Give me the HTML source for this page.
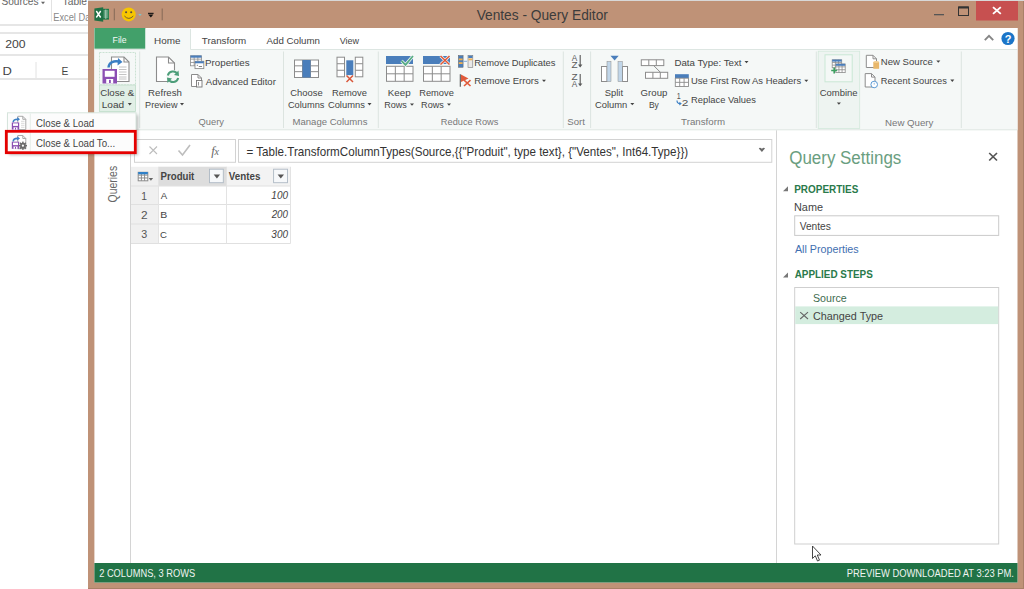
<!DOCTYPE html>
<html><head><meta charset="utf-8"><style>
html,body{margin:0;padding:0;width:1024px;height:589px;overflow:hidden;background:#fff}
svg{position:absolute;left:0;top:0;display:block}
text{font-family:"Liberation Sans",sans-serif;white-space:pre}
</style></head><body>
<svg width="1024" height="589" viewBox="0 0 1024 589">
<rect x="0" y="0" width="1024" height="589" fill="#FFFFFF"/>
<text x="1.44" y="4.80" font-size="11" fill="#666" textLength="37.09" lengthAdjust="spacingAndGlyphs">Sources</text>
<path d="M41.0 1.75 L45.0 1.75 L43 4.25 Z" fill="#666"/>
<line x1="51.5" y1="0" x2="51.5" y2="21.5" stroke="#E2E2E2" stroke-width="1"/>
<text x="62.60" y="4.80" font-size="11" fill="#666" textLength="24.47" lengthAdjust="spacingAndGlyphs">Table</text>
<text x="53.26" y="21.10" font-size="10" fill="#888" textLength="44.75" lengthAdjust="spacingAndGlyphs">Excel Data</text>
<rect x="0" y="24" width="88" height="2" fill="#E6E6E6"/>
<rect x="0" y="32" width="88" height="2" fill="#E6E6E6"/>
<text x="5.29" y="47.90" font-size="11" fill="#444" textLength="20.38" lengthAdjust="spacingAndGlyphs">200</text>
<rect x="0" y="54" width="88" height="2" fill="#E6E6E6"/>
<text x="2.56" y="74.70" font-size="11" fill="#444" textLength="9.35" lengthAdjust="spacingAndGlyphs">D</text>
<text x="61.58" y="74.70" font-size="11" fill="#444" textLength="6.85" lengthAdjust="spacingAndGlyphs">E</text>
<line x1="36" y1="62" x2="36" y2="78" stroke="#E2E2E2" stroke-width="1"/>
<rect x="0" y="78" width="88" height="2" fill="#E6E6E6"/>
<rect x="88" y="0" width="936" height="1" fill="#D8D8D8"/>
<rect x="88" y="1" width="935" height="587" fill="#BF9277"/>
<rect x="1023" y="1" width="1" height="588" fill="#A88068"/>
<rect x="88" y="588" width="936" height="1" fill="#A88068"/>
<text x="476.63" y="19.50" font-size="15" fill="#3C3C3C" textLength="131.25" lengthAdjust="spacingAndGlyphs">Ventes - Query Editor</text>
<rect x="976" y="1" width="42" height="19.5" fill="#C75050"/>
<path d="M993 7.1 L1000.8 13.9 M1000.8 7.1 L993 13.9" fill="none" stroke="#FFFFFF" stroke-width="1.9"/>
<rect x="958.5" y="7" width="10" height="8.5" fill="none" stroke="#333" stroke-width="1"/>
<rect x="958.5" y="6.5" width="10" height="2" fill="#333"/>
<rect x="934" y="14" width="10" height="1.3" fill="#555"/>
<rect x="94.4" y="28" width="923.1" height="554.5" fill="#FFFFFF"/>
<rect x="102.5" y="8.8" width="6.5" height="10.8" fill="#1F7A48"/>
<line x1="103.5" y1="11" x2="108.3" y2="11" stroke="#E8F3EC" stroke-width="0.6"/>
<line x1="103.5" y1="13" x2="108.3" y2="13" stroke="#E8F3EC" stroke-width="0.6"/>
<line x1="103.5" y1="15" x2="108.3" y2="15" stroke="#E8F3EC" stroke-width="0.6"/>
<line x1="103.5" y1="17" x2="108.3" y2="17" stroke="#E8F3EC" stroke-width="0.6"/>
<line x1="105.8" y1="9.5" x2="105.8" y2="19" stroke="#E8F3EC" stroke-width="0.6"/>
<path d="M94.4 8.6 L103.2 7.2 L103.2 21.8 L94.4 20.4 Z" fill="#1E7145"/>
<path d="M96.3 11 L100.7 17.5 M100.7 11 L96.3 17.5" fill="none" stroke="#FFFFFF" stroke-width="1.4"/>
<line x1="114.3" y1="8.5" x2="114.3" y2="20.3" stroke="#7E6553" stroke-width="0.9"/>
<circle cx="128.7" cy="14.4" r="7" fill="#F7C600"/>
<circle cx="126.1" cy="12.2" r="1.05" fill="#5A4A40"/><circle cx="131.2" cy="12.2" r="1.05" fill="#5A4A40"/>
<path d="M124.4 16 Q128.8 20.8 133.3 16" fill="none" stroke="#6A5530" stroke-width="0.9"/>
<path d="M138.25 13.9 L141.75 13.9 L140 16.1 Z" fill="#7FC4C8"/>
<rect x="148" y="12.8" width="5.6" height="1.1" fill="#111"/>
<path d="M148.20000000000002 14.5 L153.4 14.5 L150.8 17.5 Z" fill="#111"/>
<line x1="162.2" y1="8.5" x2="162.2" y2="20.3" stroke="#7E6553" stroke-width="0.9"/>
<rect x="94.4" y="28" width="923.1" height="21.5" fill="#FFFFFF"/>
<rect x="94.4" y="49" width="923.1" height="1" fill="#DDE6E2"/>
<rect x="94.4" y="28" width="51.1" height="20.7" fill="#42A06A"/>
<text x="112.61" y="42.50" font-size="9.6" fill="#F4FAF6" textLength="14.00" lengthAdjust="spacingAndGlyphs">File</text>
<rect x="145.5" y="28.5" width="45" height="21.5" fill="#F5F8F7"/>
<line x1="190.5" y1="29" x2="190.5" y2="49.5" stroke="#DCE5E1" stroke-width="1"/>
<text x="154.11" y="43.60" font-size="9.4" fill="#444444" textLength="26.47" lengthAdjust="spacingAndGlyphs">Home</text>
<text x="201.80" y="43.60" font-size="9.4" fill="#444444" textLength="44.33" lengthAdjust="spacingAndGlyphs">Transform</text>
<text x="266.50" y="43.60" font-size="9.4" fill="#444444" textLength="53.46" lengthAdjust="spacingAndGlyphs">Add Column</text>
<text x="339.66" y="43.60" font-size="9.4" fill="#444444" textLength="19.34" lengthAdjust="spacingAndGlyphs">View</text>
<path d="M984.8 40.2 L989 35.8 L993.2 40.2" fill="none" stroke="#858585" stroke-width="1.9"/>
<circle cx="1008" cy="38.5" r="6.6" fill="#1B75C8"/>
<text x="1004.71" y="42.80" font-size="11" fill="#FFFFFF" font-weight="bold" textLength="6.71" lengthAdjust="spacingAndGlyphs">?</text>
<rect x="94.4" y="50" width="923.1" height="79.5" fill="#F5F8F7"/>
<rect x="94.4" y="129.3" width="923.1" height="1" fill="#DDE6E2"/>
<line x1="139.7" y1="51.5" x2="139.7" y2="128" stroke="#DCE4E0" stroke-width="1"/>
<line x1="283.5" y1="51.5" x2="283.5" y2="128" stroke="#DCE4E0" stroke-width="1"/>
<line x1="378.3" y1="51.5" x2="378.3" y2="128" stroke="#DCE4E0" stroke-width="1"/>
<line x1="563.3" y1="51.5" x2="563.3" y2="128" stroke="#DCE4E0" stroke-width="1"/>
<line x1="590.6" y1="51.5" x2="590.6" y2="128" stroke="#DCE4E0" stroke-width="1"/>
<line x1="816.3" y1="51.5" x2="816.3" y2="128" stroke="#DCE4E0" stroke-width="1"/>
<line x1="961.3" y1="51.5" x2="961.3" y2="128" stroke="#DCE4E0" stroke-width="1"/>
<rect x="99.5" y="52.5" width="36" height="32.5" fill="none" stroke="#BFDCC9" stroke-width="0.8" stroke-dasharray="2 1"/>
<rect x="99.5" y="85" width="36" height="26.5" fill="#E1EFE6" stroke="#BFDCC9" stroke-width="0.8"/>
<text x="100.22" y="95.80" font-size="9.4" fill="#444444" textLength="33.95" lengthAdjust="spacingAndGlyphs">Close &amp;</text>
<text x="101.69" y="108.00" font-size="9.4" fill="#444444" textLength="22.46" lengthAdjust="spacingAndGlyphs">Load</text>
<path d="M127.80000000000001 103.1 L131.8 103.1 L129.8 105.5 Z" fill="#444444"/>
<text x="148.13" y="95.80" font-size="9.4" fill="#444444" textLength="33.82" lengthAdjust="spacingAndGlyphs">Refresh</text>
<text x="145.07" y="108.00" font-size="9.4" fill="#444444" textLength="32.40" lengthAdjust="spacingAndGlyphs">Preview</text>
<path d="M180.0 103.1 L184.0 103.1 L182 105.5 Z" fill="#444444"/>
<text x="205.02" y="65.60" font-size="9.4" fill="#444444" textLength="44.60" lengthAdjust="spacingAndGlyphs">Properties</text>
<text x="205.80" y="84.50" font-size="9.4" fill="#444444" textLength="70.07" lengthAdjust="spacingAndGlyphs">Advanced Editor</text>
<text x="198.58" y="125.10" font-size="9.4" fill="#777777" textLength="25.40" lengthAdjust="spacingAndGlyphs">Query</text>
<text x="290.23" y="95.80" font-size="9.4" fill="#444444" textLength="32.41" lengthAdjust="spacingAndGlyphs">Choose</text>
<text x="287.94" y="108.00" font-size="9.4" fill="#444444" textLength="36.49" lengthAdjust="spacingAndGlyphs">Columns</text>
<text x="331.95" y="95.80" font-size="9.4" fill="#444444" textLength="34.96" lengthAdjust="spacingAndGlyphs">Remove</text>
<text x="327.93" y="108.00" font-size="9.4" fill="#444444" textLength="36.90" lengthAdjust="spacingAndGlyphs">Columns</text>
<path d="M367.5 103.1 L371.5 103.1 L369.5 105.5 Z" fill="#444444"/>
<text x="292.54" y="125.10" font-size="9.4" fill="#777777" textLength="74.88" lengthAdjust="spacingAndGlyphs">Manage Columns</text>
<text x="387.82" y="96.30" font-size="9.4" fill="#444444" textLength="22.78" lengthAdjust="spacingAndGlyphs">Keep</text>
<text x="384.18" y="108.40" font-size="9.4" fill="#444444" textLength="22.65" lengthAdjust="spacingAndGlyphs">Rows</text>
<path d="M410.0 103.39999999999999 L414.0 103.39999999999999 L412 105.8 Z" fill="#444444"/>
<text x="419.26" y="96.30" font-size="9.4" fill="#444444" textLength="34.55" lengthAdjust="spacingAndGlyphs">Remove</text>
<text x="421.07" y="108.40" font-size="9.4" fill="#444444" textLength="22.75" lengthAdjust="spacingAndGlyphs">Rows</text>
<path d="M447.0 103.39999999999999 L451.0 103.39999999999999 L449 105.8 Z" fill="#444444"/>
<text x="474.25" y="65.60" font-size="9.4" fill="#444444" textLength="81.28" lengthAdjust="spacingAndGlyphs">Remove Duplicates</text>
<text x="474.23" y="84.30" font-size="9.4" fill="#444444" textLength="64.59" lengthAdjust="spacingAndGlyphs">Remove Errors</text>
<path d="M542.0 79.7 L546.0 79.7 L544 82.10000000000001 Z" fill="#444444"/>
<text x="440.86" y="125.30" font-size="9.4" fill="#777777" textLength="57.46" lengthAdjust="spacingAndGlyphs">Reduce Rows</text>
<text x="567.27" y="125.30" font-size="9.4" fill="#777777" textLength="17.62" lengthAdjust="spacingAndGlyphs">Sort</text>
<text x="604.78" y="95.70" font-size="9.4" fill="#444444" textLength="18.27" lengthAdjust="spacingAndGlyphs">Split</text>
<text x="594.93" y="107.90" font-size="9.4" fill="#444444" textLength="32.29" lengthAdjust="spacingAndGlyphs">Column</text>
<path d="M630.3 102.89999999999999 L634.3 102.89999999999999 L632.3 105.3 Z" fill="#444444"/>
<text x="640.62" y="95.70" font-size="9.4" fill="#444444" textLength="26.76" lengthAdjust="spacingAndGlyphs">Group</text>
<text x="648.92" y="107.90" font-size="9.4" fill="#444444" textLength="9.90" lengthAdjust="spacingAndGlyphs">By</text>
<text x="674.42" y="65.60" font-size="9.4" fill="#444444" textLength="67.14" lengthAdjust="spacingAndGlyphs">Data Type: Text</text>
<path d="M744.5 60.9 L748.5 60.9 L746.5 63.300000000000004 Z" fill="#444444"/>
<text x="691.10" y="84.30" font-size="9.4" fill="#444444" textLength="110.04" lengthAdjust="spacingAndGlyphs">Use First Row As Headers</text>
<path d="M804.3 79.7 L808.3 79.7 L806.3 82.10000000000001 Z" fill="#444444"/>
<text x="691.05" y="102.60" font-size="9.4" fill="#444444" textLength="64.88" lengthAdjust="spacingAndGlyphs">Replace Values</text>
<text x="681.11" y="125.30" font-size="9.4" fill="#777777" textLength="43.92" lengthAdjust="spacingAndGlyphs">Transform</text>
<rect x="818.2" y="51.2" width="41.5" height="77.3" fill="#EEF4F1" stroke="#D2E8DB" stroke-width="0.8"/>
<rect x="825" y="54.8" width="27.2" height="27" fill="#F4F8F6" stroke="#C9E7D5" stroke-width="1"/>
<text x="819.73" y="95.70" font-size="9.4" fill="#444444" textLength="37.92" lengthAdjust="spacingAndGlyphs">Combine</text>
<path d="M836.9 102.39999999999999 L840.9 102.39999999999999 L838.9 104.8 Z" fill="#444444"/>
<text x="880.83" y="65.20" font-size="9.4" fill="#444444" textLength="52.11" lengthAdjust="spacingAndGlyphs">New Source</text>
<path d="M936.3 60.4 L940.3 60.4 L938.3 62.800000000000004 Z" fill="#444444"/>
<text x="880.86" y="84.30" font-size="9.4" fill="#444444" textLength="65.97" lengthAdjust="spacingAndGlyphs">Recent Sources</text>
<path d="M950.3 79.5 L954.3 79.5 L952.3 81.9 Z" fill="#444444"/>
<text x="885.03" y="125.70" font-size="9.4" fill="#777777" textLength="48.39" lengthAdjust="spacingAndGlyphs">New Query</text>
<path d="M111.5 57 L124 57 L129 62 L129 81.5 L111.5 81.5 Z" fill="#FFFFFF" stroke="#8C8C8C" stroke-width="1.1"/>
<path d="M124 57 L124 62 L129 62" fill="none" stroke="#8C8C8C" stroke-width="1.1"/>
<line x1="119" y1="67" x2="126.5" y2="67" stroke="#BDBDBD" stroke-width="0.9"/>
<line x1="119" y1="69.5" x2="126.5" y2="69.5" stroke="#BDBDBD" stroke-width="0.9"/>
<line x1="119" y1="72" x2="126.5" y2="72" stroke="#BDBDBD" stroke-width="0.9"/>
<line x1="119" y1="74.5" x2="126.5" y2="74.5" stroke="#BDBDBD" stroke-width="0.9"/>
<line x1="119" y1="77" x2="126.5" y2="77" stroke="#BDBDBD" stroke-width="0.9"/>
<line x1="119" y1="79" x2="126.5" y2="79" stroke="#BDBDBD" stroke-width="0.9"/>
<path d="M108.5 67.5 C109 62 114 60.5 119 61.5" fill="none" stroke="#3B7FC4" stroke-width="2.4"/>
<path d="M118 58 L122.5 62 L117.5 65.5 Z" fill="#3B7FC4"/>
<rect x="102.5" y="69" width="14.5" height="14.5" fill="#8B4FB3"/>
<rect x="104.8" y="70.8" width="9.8" height="6" fill="#FFFFFF"/>
<rect x="106.2" y="79" width="7" height="4.5" fill="#FFFFFF"/>
<rect x="109" y="79.8" width="1.8" height="3.2" fill="#8B4FB3"/>
<path d="M156.5 57 L168.5 57 L174.5 63 L174.5 81.5 L156.5 81.5 Z" fill="#FFFFFF" stroke="#8C8C8C" stroke-width="1.1"/>
<path d="M168.5 57 L168.5 63 L174.5 63" fill="none" stroke="#8C8C8C" stroke-width="1.1"/>
<circle cx="173" cy="76.8" r="6.8" fill="#F5F8F7"/>
<path d="M167.8 75.5 A5.3 5.3 0 0 1 177.5 74" fill="none" stroke="#4D9E7A" stroke-width="2"/>
<path d="M178.5 70.5 L179 76 L174 75 Z" fill="#4D9E7A"/>
<path d="M178.2 78 A5.3 5.3 0 0 1 168.5 79.5" fill="none" stroke="#4D9E7A" stroke-width="2"/>
<path d="M167.5 83 L167 77.5 L172 78.5 Z" fill="#4D9E7A"/>
<rect x="190.5" y="55.8" width="11.0" height="10.0" fill="#FFFFFF" stroke="#8C8C8C" stroke-width="0.8"/>
<line x1="194.16666666666666" y1="55.8" x2="194.16666666666666" y2="65.8" stroke="#8C8C8C" stroke-width="0.8"/>
<line x1="197.83333333333334" y1="55.8" x2="197.83333333333334" y2="65.8" stroke="#8C8C8C" stroke-width="0.8"/>
<line x1="190.5" y1="59.13333333333333" x2="201.5" y2="59.13333333333333" stroke="#8C8C8C" stroke-width="0.8"/>
<line x1="190.5" y1="62.46666666666666" x2="201.5" y2="62.46666666666666" stroke="#8C8C8C" stroke-width="0.8"/>
<rect x="190.5" y="55.5" width="11" height="2.2" fill="#4A7EBB"/>
<rect x="195" y="61.3" width="8.8" height="7.3" fill="#FFFFFF" stroke="#8C8C8C" stroke-width="0.9"/>
<rect x="195" y="61.3" width="8.8" height="2" fill="#4A7EBB"/>
<line x1="196.8" y1="65.3" x2="198" y2="65.3" stroke="#777" stroke-width="0.9"/>
<line x1="198.8" y1="66.5" x2="202" y2="66.5" stroke="#777" stroke-width="0.9"/>
<path d="M191.5 74.5 L198.0 74.5 L201.5 78.0 L201.5 86.5 L191.5 86.5 Z" fill="#FFFFFF" stroke="#8C8C8C" stroke-width="1"/>
<path d="M198.0 74.5 L198.0 78.0 L201.5 78.0" fill="none" stroke="#8C8C8C" stroke-width="1"/>
<rect x="196.5" y="80.5" width="5.5" height="6.5" fill="#FFFFFF" stroke="#777" stroke-width="0.9"/>
<line x1="198.5" y1="82" x2="198.5" y2="85.5" stroke="#777" stroke-width="0.8"/>
<rect x="294.5" y="60" width="24.0" height="17.5" fill="#FFFFFF" stroke="#8C8C8C" stroke-width="1"/>
<line x1="302.5" y1="60" x2="302.5" y2="77.5" stroke="#8C8C8C" stroke-width="1"/>
<line x1="310.5" y1="60" x2="310.5" y2="77.5" stroke="#8C8C8C" stroke-width="1"/>
<line x1="294.5" y1="65.83333333333333" x2="318.5" y2="65.83333333333333" stroke="#8C8C8C" stroke-width="1"/>
<line x1="294.5" y1="71.66666666666667" x2="318.5" y2="71.66666666666667" stroke="#8C8C8C" stroke-width="1"/>
<rect x="302.5" y="60" width="8" height="17.5" fill="#4A7EBB"/>
<rect x="337" y="57.2" width="7.5" height="19.599999999999994" fill="#FFFFFF" stroke="#8C8C8C" stroke-width="1"/>
<line x1="337" y1="63.733333333333334" x2="344.5" y2="63.733333333333334" stroke="#8C8C8C" stroke-width="1"/>
<line x1="337" y1="70.26666666666667" x2="344.5" y2="70.26666666666667" stroke="#8C8C8C" stroke-width="1"/>
<rect x="355.3" y="57.2" width="7.5" height="19.599999999999994" fill="#FFFFFF" stroke="#8C8C8C" stroke-width="1"/>
<line x1="355.3" y1="63.733333333333334" x2="362.8" y2="63.733333333333334" stroke="#8C8C8C" stroke-width="1"/>
<line x1="355.3" y1="70.26666666666667" x2="362.8" y2="70.26666666666667" stroke="#8C8C8C" stroke-width="1"/>
<rect x="346.3" y="60.3" width="7" height="14.8" fill="#4A7EBB"/>
<path d="M346.5 75.5 L353 82 M353 75.5 L346.5 82" fill="none" stroke="#D9573A" stroke-width="1.5"/>
<rect x="386" y="56" width="27" height="8" fill="#4A7EBB"/>
<rect x="386.5" y="66.3" width="26.5" height="15.0" fill="#FFFFFF" stroke="#8C8C8C" stroke-width="1"/>
<line x1="395.3333333333333" y1="66.3" x2="395.3333333333333" y2="81.3" stroke="#8C8C8C" stroke-width="1"/>
<line x1="404.1666666666667" y1="66.3" x2="404.1666666666667" y2="81.3" stroke="#8C8C8C" stroke-width="1"/>
<line x1="386.5" y1="73.8" x2="413" y2="73.8" stroke="#8C8C8C" stroke-width="1"/>
<path d="M401.5 60.8 L405.5 64.8 L413 56" fill="none" stroke="#F5F8F7" stroke-width="3.2"/>
<path d="M401.5 60.8 L405.5 64.8 L413 56" fill="none" stroke="#58AD85" stroke-width="1.8"/>
<rect x="423" y="56" width="27" height="8" fill="#4A7EBB"/>
<rect x="423.5" y="66.3" width="26.5" height="15.0" fill="#FFFFFF" stroke="#8C8C8C" stroke-width="1"/>
<line x1="432.3333333333333" y1="66.3" x2="432.3333333333333" y2="81.3" stroke="#8C8C8C" stroke-width="1"/>
<line x1="441.1666666666667" y1="66.3" x2="441.1666666666667" y2="81.3" stroke="#8C8C8C" stroke-width="1"/>
<line x1="423.5" y1="73.8" x2="450" y2="73.8" stroke="#8C8C8C" stroke-width="1"/>
<path d="M440.5 56 L449.5 64.5 M449.5 56 L440.5 64.5" fill="none" stroke="#F5F8F7" stroke-width="3"/>
<path d="M440.5 56 L449.5 64.5 M449.5 56 L440.5 64.5" fill="none" stroke="#E05A3A" stroke-width="1.6"/>
<rect x="458.3" y="55.5" width="4.8" height="11.8" fill="#4A7EBB" stroke="#666" stroke-width="0.5"/>
<rect x="458.8" y="58.5" width="3.8" height="1.8" fill="#F0B050"/>
<rect x="458.8" y="62.2" width="3.8" height="1.8" fill="#F0B050"/>
<rect x="468" y="55.5" width="4.8" height="11.8" fill="#E8E8E8" stroke="#777" stroke-width="0.6"/>
<rect x="468.3" y="55.7" width="4.2" height="2.3" fill="#4A7EBB"/>
<rect x="468.5" y="58.5" width="3.8" height="1.8" fill="#F0B050"/>
<line x1="463.5" y1="61.3" x2="467" y2="61.3" stroke="#6FA0D8" stroke-width="0.9"/>
<line x1="460.3" y1="74.3" x2="460.3" y2="86.8" stroke="#555" stroke-width="1.1"/>
<path d="M461 74.5 L468.5 78.5 L461 82 Z" fill="#E05A3A"/>
<path d="M464 80.2 L470.5 86 M470.5 80.2 L464 86" fill="none" stroke="#E05A3A" stroke-width="1.6"/>
<text x="571.80" y="60.90" font-size="8.2" fill="#5A5A5A" textLength="5.52" lengthAdjust="spacingAndGlyphs">A</text>
<text x="571.50" y="67.80" font-size="8.2" fill="#5A5A5A" textLength="6.11" lengthAdjust="spacingAndGlyphs">Z</text>
<line x1="580.2" y1="55.1" x2="580.2" y2="66.4" stroke="#5A5A5A" stroke-width="1.1"/>
<path d="M578 64.6 L582.4 64.6 L580.2 67.4 Z" fill="#5A5A5A"/>
<text x="571.50" y="79.70" font-size="8.2" fill="#5A5A5A" textLength="6.11" lengthAdjust="spacingAndGlyphs">Z</text>
<text x="571.80" y="86.60" font-size="8.2" fill="#5A5A5A" textLength="5.52" lengthAdjust="spacingAndGlyphs">A</text>
<line x1="580.2" y1="73.9" x2="580.2" y2="85.2" stroke="#5A5A5A" stroke-width="1.1"/>
<path d="M578 83.4 L582.4 83.4 L580.2 86.2 Z" fill="#5A5A5A"/>
<rect x="601.5" y="66.5" width="5.5" height="15" fill="#FFFFFF" stroke="#8C8C8C" stroke-width="1"/>
<rect x="622.5" y="66.5" width="5" height="15" fill="#FFFFFF" stroke="#8C8C8C" stroke-width="1"/>
<rect x="607" y="61.5" width="4" height="20" fill="#C1D6E9" stroke="#8C8C8C" stroke-width="0.5"/>
<rect x="618" y="61.5" width="4.3" height="20" fill="#C1D6E9" stroke="#8C8C8C" stroke-width="0.5"/>
<path d="M610.5 55.8 L618.7 55.8 L614.6 60.6 Z" fill="#4A7EBB"/>
<rect x="641.3" y="59.8" width="22.5" height="5.799999999999997" fill="#FFFFFF" stroke="#8C8C8C" stroke-width="1"/>
<line x1="648.8" y1="59.8" x2="648.8" y2="65.6" stroke="#8C8C8C" stroke-width="1"/>
<line x1="656.3" y1="59.8" x2="656.3" y2="65.6" stroke="#8C8C8C" stroke-width="1"/>
<rect x="645.5" y="72.3" width="22.200000000000045" height="6.0" fill="#FFFFFF" stroke="#8C8C8C" stroke-width="1"/>
<line x1="652.9" y1="72.3" x2="652.9" y2="78.3" stroke="#8C8C8C" stroke-width="1"/>
<line x1="660.3000000000001" y1="72.3" x2="660.3000000000001" y2="78.3" stroke="#8C8C8C" stroke-width="1"/>
<line x1="653.7" y1="65.6" x2="660.4" y2="72.3" stroke="#8C8C8C" stroke-width="1"/>
<rect x="675" y="74.2" width="13.8" height="4" fill="#4A7EBB"/>
<rect x="675.3" y="78.2" width="13.200000000000045" height="8.299999999999997" fill="#FFFFFF" stroke="#8C8C8C" stroke-width="0.9"/>
<line x1="679.6999999999999" y1="78.2" x2="679.6999999999999" y2="86.5" stroke="#8C8C8C" stroke-width="0.9"/>
<line x1="684.1" y1="78.2" x2="684.1" y2="86.5" stroke="#8C8C8C" stroke-width="0.9"/>
<line x1="675.3" y1="82.35" x2="688.5" y2="82.35" stroke="#8C8C8C" stroke-width="0.9"/>
<text x="676.67" y="99.30" font-size="8.6" fill="#555" textLength="3.96" lengthAdjust="spacingAndGlyphs">1</text>
<text x="681.71" y="106.00" font-size="9.6" fill="#555" textLength="6.60" lengthAdjust="spacingAndGlyphs">2</text>
<path d="M677 100.5 Q677 103.8 680.5 103.6" fill="none" stroke="#3B7FC4" stroke-width="1.2"/>
<path d="M679.3 101.8 L681.8 103.6 L679.3 105.4 Z" fill="#3B7FC4"/>
<rect x="832.2" y="59.8" width="9.5" height="8.0" fill="#FFFFFF" stroke="#8C8C8C" stroke-width="0.8"/>
<line x1="835.3666666666667" y1="59.8" x2="835.3666666666667" y2="67.8" stroke="#8C8C8C" stroke-width="0.8"/>
<line x1="838.5333333333334" y1="59.8" x2="838.5333333333334" y2="67.8" stroke="#8C8C8C" stroke-width="0.8"/>
<line x1="832.2" y1="62.46666666666666" x2="841.7" y2="62.46666666666666" stroke="#8C8C8C" stroke-width="0.8"/>
<line x1="832.2" y1="65.13333333333333" x2="841.7" y2="65.13333333333333" stroke="#8C8C8C" stroke-width="0.8"/>
<rect x="832.2" y="59.6" width="9.5" height="2" fill="#4A7EBB"/>
<rect x="835.8" y="64" width="9.400000000000091" height="8.599999999999994" fill="#FFFFFF" stroke="#8C8C8C" stroke-width="0.8"/>
<line x1="838.9333333333333" y1="64" x2="838.9333333333333" y2="72.6" stroke="#8C8C8C" stroke-width="0.8"/>
<line x1="842.0666666666667" y1="64" x2="842.0666666666667" y2="72.6" stroke="#8C8C8C" stroke-width="0.8"/>
<line x1="835.8" y1="66.86666666666666" x2="845.2" y2="66.86666666666666" stroke="#8C8C8C" stroke-width="0.8"/>
<line x1="835.8" y1="69.73333333333333" x2="845.2" y2="69.73333333333333" stroke="#8C8C8C" stroke-width="0.8"/>
<rect x="835.8" y="63.8" width="9.4" height="2" fill="#4A7EBB"/>
<path d="M834.2 67.5 L834.2 73.5 M831.2 70.5 L837.2 70.5" fill="none" stroke="#3DA060" stroke-width="1.6"/>
<path d="M866.3 55.3 L873.0 55.3 L876.5 58.8 L876.5 67.5 L866.3 67.5 Z" fill="#FFFFFF" stroke="#8C8C8C" stroke-width="1"/>
<path d="M873.0 55.3 L873.0 58.8 L876.5 58.8" fill="none" stroke="#8C8C8C" stroke-width="1"/>
<rect x="873.3" y="62" width="5.8" height="6.8" fill="#E8B76A"/>
<ellipse cx="876.2" cy="62" rx="2.9" ry="1" fill="#F2CD8E"/>
<path d="M865.2 73.6 L871.5 73.6 L875 77.1 L875 87 L865.2 87 Z" fill="#FFFFFF" stroke="#8C8C8C" stroke-width="1"/>
<path d="M871.5 73.6 L871.5 77.1 L875 77.1" fill="none" stroke="#8C8C8C" stroke-width="1"/>
<circle cx="874.2" cy="84.5" r="3.3" fill="#FFFFFF" stroke="#5B9BD5" stroke-width="1"/>
<line x1="874.2" y1="82.8" x2="874.2" y2="84.6" stroke="#5B9BD5" stroke-width="0.7"/>
<line x1="130.5" y1="130.3" x2="130.5" y2="563" stroke="#D4D4D4" stroke-width="1"/>
<text x="0" y="0" font-size="12" fill="#666" transform="translate(117.2 202.4) rotate(-90)" textLength="36.5" lengthAdjust="spacingAndGlyphs">Queries</text>
<rect x="134.5" y="139.5" width="101" height="22.8" fill="#FFFFFF" stroke="#D2D2D2" stroke-width="1"/>
<path d="M149.5 146.5 L157 154 M157 146.5 L149.5 154" fill="none" stroke="#BDBDBD" stroke-width="1.1"/>
<path d="M178.5 150.5 L182.5 155 L190 145" fill="none" stroke="#BDBDBD" stroke-width="1.6"/>
<text x="211.3" y="154.6" font-size="12.5" fill="#666" font-style="italic" style="font-family:'Liberation Serif',serif">f<tspan font-size="10" dx="-0.3">x</tspan></text>
<rect x="238.5" y="139.5" width="533.3" height="22.8" fill="#FFFFFF" stroke="#D2D2D2" stroke-width="1"/>
<text x="246.52" y="155.50" font-size="11.9" fill="#333" textLength="441.64" lengthAdjust="spacingAndGlyphs">= Table.TransformColumnTypes(Source,{{"Produit", type text}, {"Ventes", Int64.Type}})</text>
<path d="M758.8 148.6 Q759.8 146.9 761.9 148.8 Q764 146.9 765 148.6 L761.9 151.9 Z" fill="#6A6A6A"/>
<rect x="131" y="166.8" width="159.5" height="19.2" fill="#F0F0F0"/>
<rect x="158.5" y="166.8" width="68" height="19.2" fill="#DDDDDD"/>
<rect x="226.5" y="166.8" width="64" height="19.2" fill="#F3F3F3"/>
<rect x="131" y="186" width="27.5" height="57.5" fill="#F0F0F0"/>
<rect x="158.5" y="186" width="132" height="57.5" fill="#FFFFFF"/>
<line x1="131" y1="186" x2="290.5" y2="186" stroke="#E0E0E0" stroke-width="1"/>
<line x1="131" y1="204.5" x2="290.5" y2="204.5" stroke="#E0E0E0" stroke-width="1"/>
<line x1="131" y1="224" x2="290.5" y2="224" stroke="#E0E0E0" stroke-width="1"/>
<line x1="131" y1="243.5" x2="290.5" y2="243.5" stroke="#E0E0E0" stroke-width="1"/>
<line x1="158.5" y1="166.8" x2="158.5" y2="243.5" stroke="#E3E3E3" stroke-width="1"/>
<line x1="226.5" y1="166.8" x2="226.5" y2="243.5" stroke="#E3E3E3" stroke-width="1"/>
<line x1="290.5" y1="166.8" x2="290.5" y2="243.5" stroke="#E3E3E3" stroke-width="1"/>
<rect x="138.2" y="172.3" width="9.600000000000023" height="8.5" fill="#FFFFFF" stroke="#8C8C8C" stroke-width="1"/>
<line x1="141.4" y1="172.3" x2="141.4" y2="180.8" stroke="#8C8C8C" stroke-width="1"/>
<line x1="144.6" y1="172.3" x2="144.6" y2="180.8" stroke="#8C8C8C" stroke-width="1"/>
<line x1="138.2" y1="175.13333333333335" x2="147.8" y2="175.13333333333335" stroke="#8C8C8C" stroke-width="1"/>
<line x1="138.2" y1="177.96666666666667" x2="147.8" y2="177.96666666666667" stroke="#8C8C8C" stroke-width="1"/>
<rect x="138.2" y="172" width="9.6" height="2.3" fill="#2F80C8"/>
<path d="M148.70000000000002 178.1 L153.1 178.1 L150.9 180.70000000000002 Z" fill="#666"/>
<text x="160.57" y="180.40" font-size="10.4" fill="#444" font-weight="bold" textLength="33.77" lengthAdjust="spacingAndGlyphs">Produit</text>
<text x="228.75" y="180.40" font-size="10.4" fill="#444" font-weight="bold" textLength="31.63" lengthAdjust="spacingAndGlyphs">Ventes</text>
<rect x="209.5" y="169.2" width="13.8" height="13.5" fill="#F6F8FA" stroke="#AEB9C4" stroke-width="0.9"/>
<path d="M213.70000000000002 174.55 L220.1 174.55 L216.9 178.45 Z" fill="#555"/>
<rect x="273.6" y="169.2" width="13.9" height="13.5" fill="#F6F8FA" stroke="#AEB9C4" stroke-width="0.9"/>
<path d="M277.6 174.55 L284.0 174.55 L280.8 178.45 Z" fill="#555"/>
<text x="141.22" y="200.10" font-size="11" fill="#555" textLength="5.75" lengthAdjust="spacingAndGlyphs">1</text>
<text x="160.80" y="199.30" font-size="9.6" fill="#444" textLength="6.42" lengthAdjust="spacingAndGlyphs">A</text>
<text x="271.35" y="199.30" font-size="10" fill="#444" font-style="italic" textLength="16.63" lengthAdjust="spacingAndGlyphs">100</text>
<text x="141.11" y="218.60" font-size="11" fill="#555" textLength="6.60" lengthAdjust="spacingAndGlyphs">2</text>
<text x="160.26" y="218.10" font-size="9.6" fill="#444" textLength="6.98" lengthAdjust="spacingAndGlyphs">B</text>
<text x="271.65" y="218.30" font-size="10" fill="#444" font-style="italic" textLength="16.33" lengthAdjust="spacingAndGlyphs">200</text>
<text x="141.27" y="238.00" font-size="11" fill="#555" textLength="5.97" lengthAdjust="spacingAndGlyphs">3</text>
<text x="160.12" y="237.50" font-size="9.6" fill="#444" textLength="6.94" lengthAdjust="spacingAndGlyphs">C</text>
<text x="271.35" y="237.50" font-size="10" fill="#444" font-style="italic" textLength="16.63" lengthAdjust="spacingAndGlyphs">300</text>
<line x1="776.5" y1="130.3" x2="776.5" y2="563" stroke="#D4D4D4" stroke-width="1"/>
<text x="789.24" y="163.60" font-size="18" fill="#6A9E80" textLength="112.04" lengthAdjust="spacingAndGlyphs">Query Settings</text>
<path d="M989.2 153 L997 160.5 M997 153 L989.2 160.5" fill="none" stroke="#555" stroke-width="1.7"/>
<path d="M783 191.3 L788 186.3 L788 191.3 Z" fill="#777"/>
<text x="794.25" y="192.60" font-size="11" fill="#2A7A4B" font-weight="bold" textLength="64.00" lengthAdjust="spacingAndGlyphs">PROPERTIES</text>
<text x="794.03" y="210.60" font-size="10.5" fill="#444" textLength="28.99" lengthAdjust="spacingAndGlyphs">Name</text>
<rect x="794.7" y="215.8" width="204" height="19.6" fill="#FFFFFF" stroke="#CACACA" stroke-width="1"/>
<text x="799.65" y="229.50" font-size="10.5" fill="#444" textLength="31.19" lengthAdjust="spacingAndGlyphs">Ventes</text>
<text x="794.90" y="253.20" font-size="10.5" fill="#3F6FB0" textLength="63.80" lengthAdjust="spacingAndGlyphs">All Properties</text>
<path d="M783 277.6 L788 272.6 L788 277.6 Z" fill="#777"/>
<text x="794.65" y="278.40" font-size="11" fill="#2A7A4B" font-weight="bold" textLength="78.10" lengthAdjust="spacingAndGlyphs">APPLIED STEPS</text>
<rect x="794.7" y="287.5" width="204" height="256.5" fill="#FFFFFF" stroke="#CFCFCF" stroke-width="1"/>
<rect x="795.2" y="306.4" width="203" height="17.7" fill="#D4EDDF"/>
<text x="813.02" y="301.60" font-size="10.5" fill="#3D6B4E" textLength="33.70" lengthAdjust="spacingAndGlyphs">Source</text>
<path d="M800.2 312.2 L808 319 M808 312.2 L800.2 319" fill="none" stroke="#666" stroke-width="1.1"/>
<text x="812.96" y="319.80" font-size="10.5" fill="#444" textLength="70.15" lengthAdjust="spacingAndGlyphs">Changed Type</text>
<rect x="94.4" y="563" width="923.1" height="19.5" fill="#217346"/>
<text x="99.14" y="576.70" font-size="10.5" fill="#F0F4F1" textLength="96.08" lengthAdjust="spacingAndGlyphs">2 COLUMNS, 3 ROWS</text>
<text x="846.65" y="576.60" font-size="10.5" fill="#F0F4F1" textLength="167.31" lengthAdjust="spacingAndGlyphs">PREVIEW DOWNLOADED AT 3:23 PM.</text>
<path d="M812.5 546 L812.5 558.5 L815.3 555.8 L817.5 561 L819.5 560.2 L817.3 555 L821 555 Z" fill="#FFFFFF" stroke="#333" stroke-width="0.9"/>
<defs><filter id="sh" x="-10%" y="-10%" width="130%" height="150%"><feGaussianBlur stdDeviation="1.5"/></filter></defs>
<rect x="9" y="115" width="129" height="40" fill="rgba(0,0,0,0.25)" filter="url(#sh)"/>
<rect x="7.5" y="112.8" width="128.5" height="39.5" fill="#FCFCFC" stroke="#D6E4DC" stroke-width="1"/>
<line x1="30.3" y1="113.5" x2="30.3" y2="151.5" stroke="#E5EDE8" stroke-width="1"/>
<text x="36.12" y="127.00" font-size="10.5" fill="#444" textLength="58.10" lengthAdjust="spacingAndGlyphs">Close &amp; Load</text>
<text x="36.11" y="146.60" font-size="10.5" fill="#444" textLength="79.09" lengthAdjust="spacingAndGlyphs">Close &amp; Load To...</text>
<rect x="6.3" y="131.3" width="129" height="21.4" fill="none" stroke="#E50000" stroke-width="2.8"/>
<path d="M17.8 116.3 L22.8 116.3 L25.8 119.3 L25.8 129.5 L17.8 129.5 Z" fill="#FFFFFF" stroke="#A0A0A0" stroke-width="0.9"/>
<path d="M22.8 116.3 L22.8 119.3 L25.8 119.3" fill="none" stroke="#A0A0A0" stroke-width="0.9"/>
<line x1="21" y1="121.3" x2="24.5" y2="121.3" stroke="#C8C8C8" stroke-width="0.7"/>
<line x1="21" y1="123.3" x2="24.5" y2="123.3" stroke="#C8C8C8" stroke-width="0.7"/>
<line x1="21" y1="125.3" x2="24.5" y2="125.3" stroke="#C8C8C8" stroke-width="0.7"/>
<line x1="21" y1="127.3" x2="24.5" y2="127.3" stroke="#C8C8C8" stroke-width="0.7"/>
<path d="M13.2 122.3 C13.2 120.1 14.8 119.2 17.6 119.2" fill="none" stroke="#3B7FC4" stroke-width="1.6"/>
<path d="M17.2 117.1 L20 119.2 L17.2 121.3 Z" fill="#3B7FC4"/>
<rect x="11.8" y="122.5" width="7.4" height="7.1" fill="#8B4FB3"/>
<rect x="13" y="123.39999999999999" width="5" height="2.5" fill="#FFFFFF"/>
<rect x="13.5" y="127.3" width="4" height="2.3" fill="#FFFFFF"/>
<rect x="15" y="127.7" width="1" height="1.9" fill="#8B4FB3"/>
<path d="M17.8 135.5 L22.8 135.5 L25.8 138.5 L25.8 148.7 L17.8 148.7 Z" fill="#FFFFFF" stroke="#A0A0A0" stroke-width="0.9"/>
<path d="M22.8 135.5 L22.8 138.5 L25.8 138.5" fill="none" stroke="#A0A0A0" stroke-width="0.9"/>
<path d="M13.2 141.5 C13.2 139.3 14.8 138.4 17.6 138.4" fill="none" stroke="#3B7FC4" stroke-width="1.6"/>
<path d="M17.2 136.3 L20 138.4 L17.2 140.5 Z" fill="#3B7FC4"/>
<rect x="11.8" y="141.7" width="7.4" height="7.1" fill="#8B4FB3"/>
<rect x="13" y="142.6" width="5" height="2.5" fill="#FFFFFF"/>
<rect x="13.5" y="146.5" width="4" height="2.3" fill="#FFFFFF"/>
<rect x="15" y="146.9" width="1" height="1.9" fill="#8B4FB3"/>
<rect x="22.15" y="141.6" width="1.5" height="1.8" fill="#6A6A6A" transform="rotate(0 22.9 145.7)"/>
<rect x="22.15" y="141.6" width="1.5" height="1.8" fill="#6A6A6A" transform="rotate(45 22.9 145.7)"/>
<rect x="22.15" y="141.6" width="1.5" height="1.8" fill="#6A6A6A" transform="rotate(90 22.9 145.7)"/>
<rect x="22.15" y="141.6" width="1.5" height="1.8" fill="#6A6A6A" transform="rotate(135 22.9 145.7)"/>
<rect x="22.15" y="141.6" width="1.5" height="1.8" fill="#6A6A6A" transform="rotate(180 22.9 145.7)"/>
<rect x="22.15" y="141.6" width="1.5" height="1.8" fill="#6A6A6A" transform="rotate(225 22.9 145.7)"/>
<rect x="22.15" y="141.6" width="1.5" height="1.8" fill="#6A6A6A" transform="rotate(270 22.9 145.7)"/>
<rect x="22.15" y="141.6" width="1.5" height="1.8" fill="#6A6A6A" transform="rotate(315 22.9 145.7)"/>
<circle cx="22.9" cy="145.7" r="2.9" fill="#6A6A6A" />
<circle cx="22.9" cy="145.7" r="1.1" fill="#FCFCFC"/>
</svg></body></html>
